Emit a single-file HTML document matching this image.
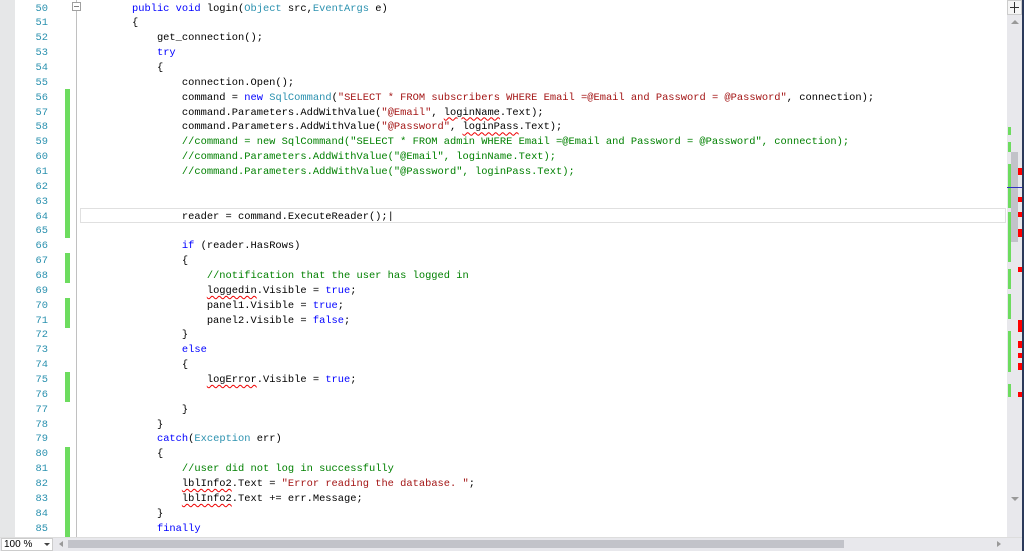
<!DOCTYPE html>
<html><head><meta charset="utf-8"><style>
*{margin:0;padding:0;box-sizing:border-box}
body{width:1024px;height:551px;overflow:hidden;background:#fff;position:relative;font-family:"Liberation Mono",monospace;font-size:10.4px}
.l{position:absolute;left:0;height:15px;line-height:15px;white-space:pre;width:1000px}
.n{position:absolute;left:0;width:48px;color:#2b91af;text-align:right}
.c{position:absolute;left:132px;color:#000}
.k{color:#0000ff}.t{color:#2b91af}.s{color:#a31515}.m{color:#008000}
.sq{text-decoration:underline wavy #e00;text-decoration-thickness:1px;text-underline-offset:2px}
.g{position:absolute;left:65px;width:5px;background:#6ddc5f}
.vg{position:absolute;left:1008px;width:3px;background:#6ddc5f}
.vr{position:absolute;left:1018px;width:4px;background:#f00}
</style></head><body>
<div style="position:absolute;left:0;top:0;width:15px;height:537px;background:#e6e7e8"></div>
<div style="position:absolute;left:76px;top:0;width:1px;height:537px;background:#c0c0c0"></div>
<div style="position:absolute;left:72px;top:2px;width:9px;height:9px;border:1px solid #a0a0a0;background:#fff"></div>
<div style="position:absolute;left:74px;top:6px;width:5px;height:1px;background:#808080"></div>
<div style="position:absolute;left:80px;top:208px;width:926px;height:15px;border:1px solid #e0e0e0"></div>
<div class="g" style="top:89px;height:149px"></div>
<div class="g" style="top:253px;height:30px"></div>
<div class="g" style="top:298px;height:30px"></div>
<div class="g" style="top:372px;height:30px"></div>
<div class="g" style="top:447px;height:90px"></div>
<div id="code"></div>
<!-- vertical scrollbar -->
<div style="position:absolute;left:1007px;top:0;width:15px;height:537px;background:#e8e8ec"></div>
<div style="position:absolute;left:1007px;top:0;width:15px;height:15px;background:#f5f5f5;border:1px solid #ccc"></div>
<div style="position:absolute;left:1010px;top:7px;width:9px;height:1px;background:#333"></div>
<div style="position:absolute;left:1014px;top:2px;width:1px;height:11px;background:#333"></div>
<div style="position:absolute;left:1011px;top:20px;border:4px solid transparent;border-bottom:4px solid #999;border-top:0"></div>
<div style="position:absolute;left:1011px;top:497px;border:4px solid transparent;border-top:4px solid #999;border-bottom:0"></div>
<div style="position:absolute;left:1011px;top:152px;width:7px;height:90px;background:#c2c3c9"></div>
<div class="vg" style="top:127px;height:8px"></div>
<div class="vg" style="top:142px;height:10px"></div>
<div class="vg" style="top:164px;height:44px"></div>
<div class="vg" style="top:212px;height:8px"></div>
<div class="vg" style="top:215px;height:47px"></div>
<div class="vg" style="top:269px;height:20px"></div>
<div class="vg" style="top:294px;height:25px"></div>
<div class="vg" style="top:331px;height:36px"></div>
<div class="vg" style="top:366px;height:6px"></div>
<div class="vg" style="top:384px;height:13px"></div>
<div class="vr" style="top:168px;height:7px"></div>
<div class="vr" style="top:197px;height:5px"></div>
<div class="vr" style="top:212px;height:5px"></div>
<div class="vr" style="top:229px;height:8px"></div>
<div class="vr" style="top:267px;height:5px"></div>
<div class="vr" style="top:320px;height:12px"></div>
<div class="vr" style="top:341px;height:7px"></div>
<div class="vr" style="top:353px;height:5px"></div>
<div class="vr" style="top:363px;height:7px"></div>
<div class="vr" style="top:392px;height:5px"></div>
<div style="position:absolute;left:1007px;top:187px;width:16px;height:1px;background:#3030c0"></div>
<div style="position:absolute;left:1022px;top:0;width:2px;height:551px;background:#2b3a5a"></div>
<!-- bottom bar -->
<div style="position:absolute;left:0;top:537px;width:1022px;height:14px;background:#e8e8ec;border-top:1px solid #ddd"></div>
<div style="position:absolute;left:1px;top:538px;width:52px;height:13px;background:#fff;border:1px solid #ccc;font-family:'Liberation Sans',sans-serif;font-size:10px;line-height:11px;padding-left:2px">100 %</div>
<div style="position:absolute;left:44px;top:543px;border:3px solid transparent;border-top:3px solid #444;border-bottom:0"></div>
<div style="position:absolute;left:59px;top:541px;border:3px solid transparent;border-right:4px solid #999;border-left:0"></div>
<div style="position:absolute;left:68px;top:540px;width:776px;height:8px;background:#c2c3c9"></div>
<div style="position:absolute;left:997px;top:541px;border:3px solid transparent;border-left:4px solid #999;border-right:0"></div>
<script>
var L=[
['50','        <span class="k">public void</span> login(<span class="t">Object</span> src,<span class="t">EventArgs</span> e)'],
['51','        {'],
['52','            get_connection();'],
['53','            <span class="k">try</span>'],
['54','            {'],
['55','                connection.Open();'],
['56','                command = <span class="k">new</span> <span class="t">SqlCommand</span>(<span class="s">"SELECT * FROM subscribers WHERE Email =@Email and Password = @Password"</span>, connection);'],
['57','                command.Parameters.AddWithValue(<span class="s">"@Email"</span>, <span class="sq">loginName</span>.Text);'],
['58','                command.Parameters.AddWithValue(<span class="s">"@Password"</span>, <span class="sq">loginPass</span>.Text);'],
['59','                <span class="m">//command = new SqlCommand("SELECT * FROM admin WHERE Email =@Email and Password = @Password", connection);</span>'],
['60','                <span class="m">//command.Parameters.AddWithValue("@Email", loginName.Text);</span>'],
['61','                <span class="m">//command.Parameters.AddWithValue("@Password", loginPass.Text);</span>'],
['62',''],['63',''],
['64','                reader = command.ExecuteReader();|'],
['65',''],
['66','                <span class="k">if</span> (reader.HasRows)'],
['67','                {'],
['68','                    <span class="m">//notification that the user has logged in</span>'],
['69','                    <span class="sq">loggedin</span>.Visible = <span class="k">true</span>;'],
['70','                    panel1.Visible = <span class="k">true</span>;'],
['71','                    panel2.Visible = <span class="k">false</span>;'],
['72','                }'],
['73','                <span class="k">else</span>'],
['74','                {'],
['75','                    <span class="sq">logError</span>.Visible = <span class="k">true</span>;'],
['76',''],
['77','                }'],
['78','            }'],
['79','            <span class="k">catch</span>(<span class="t">Exception</span> err)'],
['80','            {'],
['81','                <span class="m">//user did not log in successfully</span>'],
['82','                <span class="sq">lblInfo2</span>.Text = <span class="s">"Error reading the database. "</span>;'],
['83','                <span class="sq">lblInfo2</span>.Text += err.Message;'],
['84','            }'],
['85','            <span class="k">finally</span>']];
var h='';
L.forEach(function(r,i){h+='<div class="l" style="top:'+(i*14.86+1.5).toFixed(2)+'px"><span class="n">'+r[0]+'</span><span class="c">'+r[1].replace(/^ {8}/,'')+'</span></div>';});
document.getElementById('code').innerHTML=h;
</script>
</body></html>
